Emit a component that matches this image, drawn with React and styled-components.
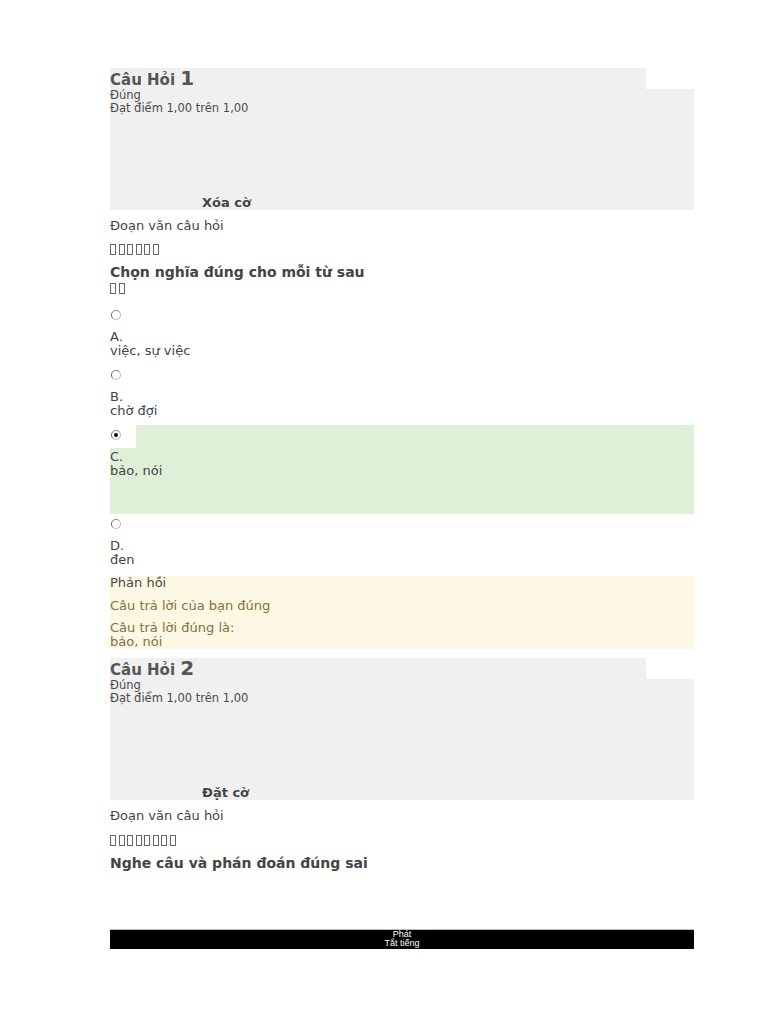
import React from "react";
import styled, { createGlobalStyle } from "styled-components";

const GlobalStyle = createGlobalStyle`
  body {
    margin: 0;
    background: #ffffff;
    font-family: "DejaVu Sans", "Noto Sans", sans-serif;
    color: #444444;
  }
`;

const Page = styled.div`
  width: 584px;
  padding: 68px 0 40px 110px;
`;

const Question = styled.section`
  display: flex;
  flex-direction: column;
  margin-bottom: 9px;
`;

const Heading = styled.h3`
  margin: 0 48px 0 0;
  height: 21px;
  background: #f0f0f0;
  font-size: 15px;
  line-height: 21px;
  font-weight: 700;
  color: #555555;
`;

const QNumber = styled.span`
  font-size: 20px;
`;

const InfoBody = styled.div`
  height: 121px;
  background: #f0f0f0;
  display: flex;
  flex-direction: column;
  font-size: 11.5px;
  line-height: 13px;
  color: #4a4a4a;
`;

const Flag = styled.div`
  margin-top: auto;
  padding: 0 0 0 92px;
  font-size: 13px;
  line-height: 15px;
  font-weight: 700;
  color: #444;
`;

const Content = styled.div`
  display: flex;
  flex-direction: column;
  font-size: 13px;
  line-height: 14px;
`;

const Label = styled.div`
  margin-top: 9px;
`;

const TofuRow = styled.div`
  margin-top: ${(p) => p.$gap}px;
  height: 14px;
  display: flex;
  align-items: center;
`;

const Tofu = styled.span`
  width: 6px;
  height: 11px;
  border: 1px solid #666;
  box-sizing: border-box;
  margin-right: 2.5px;
`;

const Prompt = styled.div`
  margin-top: 7px;
  font-size: 14px;
  line-height: 18px;
  font-weight: 700;
  color: #444;
`;

const Answers = styled.div`
  margin-top: 10px;
  display: flex;
  flex-direction: column;
`;

const Option = styled.div`
  min-height: ${(p) => (p.$tall ? 89 : 60)}px;
  background: ${(p) => (p.$correct ? "#dff0d8" : "transparent")};
  display: flex;
  flex-direction: column;
  align-items: flex-start;
`;

const RadioBox = styled.div`
  width: 26px;
  height: 23px;
  background: #ffffff;
  display: flex;
  align-items: center;
  padding-left: 1px;
  box-sizing: border-box;
`;

const Radio = styled.span`
  width: 10px;
  height: 10px;
  border-radius: 50%;
  border: 1px solid #bbb;
  border-left-color: #666;
  border-top-color: #888;
  box-sizing: border-box;
  display: flex;
  align-items: center;
  justify-content: center;
  margin-top: -3px;

  &::after {
    content: "";
    width: 4px;
    height: 4px;
    border-radius: 50%;
    background: ${(p) => (p.$checked ? "#111" : "transparent")};
  }
`;

const OptionText = styled.div`
  margin-top: ${(p) => (p.$first ? 2 : 0)}px;
  font-size: 13px;
  line-height: 14px;
  color: #444;
`;

const Feedback = styled.div`
  margin-top: 2px;
  background: #fcf8e3;
  font-size: 13px;
  line-height: 14px;
  color: #8a6d3b;
  display: flex;
  flex-direction: column;
`;

const FeedbackTitle = styled.div`
  color: #4a4a4a;
`;

const FeedbackLine = styled.div`
  margin-top: ${(p) => p.$gap}px;
`;

const Player = styled.div`
  margin-top: 57px;
  height: 20px;
  background: #000;
  border-top: 1px solid #bbb;
  box-sizing: border-box;
  color: #fff;
  font-family: "Liberation Sans", Arial, sans-serif;
  font-size: 9px;
  line-height: 9px;
  display: flex;
  flex-direction: column;
  align-items: center;
`;

const TofuText = ({ count }) => (
  <>
    {Array.from({ length: count }).map((_, i) => (
      <Tofu key={i} />
    ))}
  </>
);

const options = [
  { key: "A", text: "việc, sự việc" },
  { key: "B", text: "chờ đợi" },
  { key: "C", text: "bảo, nói", checked: true },
  { key: "D", text: "đen" },
];

const Info = ({ num, flag }) => (
  <>
    <Heading>
      Câu Hỏi <QNumber>{num}</QNumber>
    </Heading>
    <InfoBody>
      <div>Đúng</div>
      <div>Đạt điểm 1,00 trên 1,00</div>
      <Flag>{flag}</Flag>
    </InfoBody>
  </>
);

export default function App() {
  return (
    <Page>
      <GlobalStyle />
      <Question>
        <Info num="1" flag="Xóa cờ" />
        <Content>
          <Label>Đoạn văn câu hỏi</Label>
          <TofuRow $gap={9}>
            <TofuText count={6} />
          </TofuRow>
          <Prompt>Chọn nghĩa đúng cho mỗi từ sau</Prompt>
          <TofuRow $gap={0}>
            <TofuText count={2} />
          </TofuRow>
          <Answers>
            {options.map((o) => (
              <Option key={o.key} $correct={o.checked} $tall={o.checked}>
                <RadioBox>
                  <Radio $checked={o.checked} />
                </RadioBox>
                <OptionText $first>{o.key}.</OptionText>
                <OptionText>{o.text}</OptionText>
              </Option>
            ))}
          </Answers>
          <Feedback>
            <FeedbackTitle>Phản hồi</FeedbackTitle>
            <FeedbackLine $gap={9}>Câu trả lời của bạn đúng</FeedbackLine>
            <FeedbackLine $gap={8}>Câu trả lời đúng là:</FeedbackLine>
            <FeedbackLine $gap={0}>bảo, nói</FeedbackLine>
          </Feedback>
        </Content>
      </Question>
      <Question>
        <Info num="2" flag="Đặt cờ" />
        <Content>
          <Label>Đoạn văn câu hỏi</Label>
          <TofuRow $gap={10}>
            <TofuText count={8} />
          </TofuRow>
          <Prompt>Nghe câu và phán đoán đúng sai</Prompt>
          <Player>
            <div>Phát</div>
            <div>Tắt tiếng</div>
          </Player>
        </Content>
      </Question>
    </Page>
  );
}
